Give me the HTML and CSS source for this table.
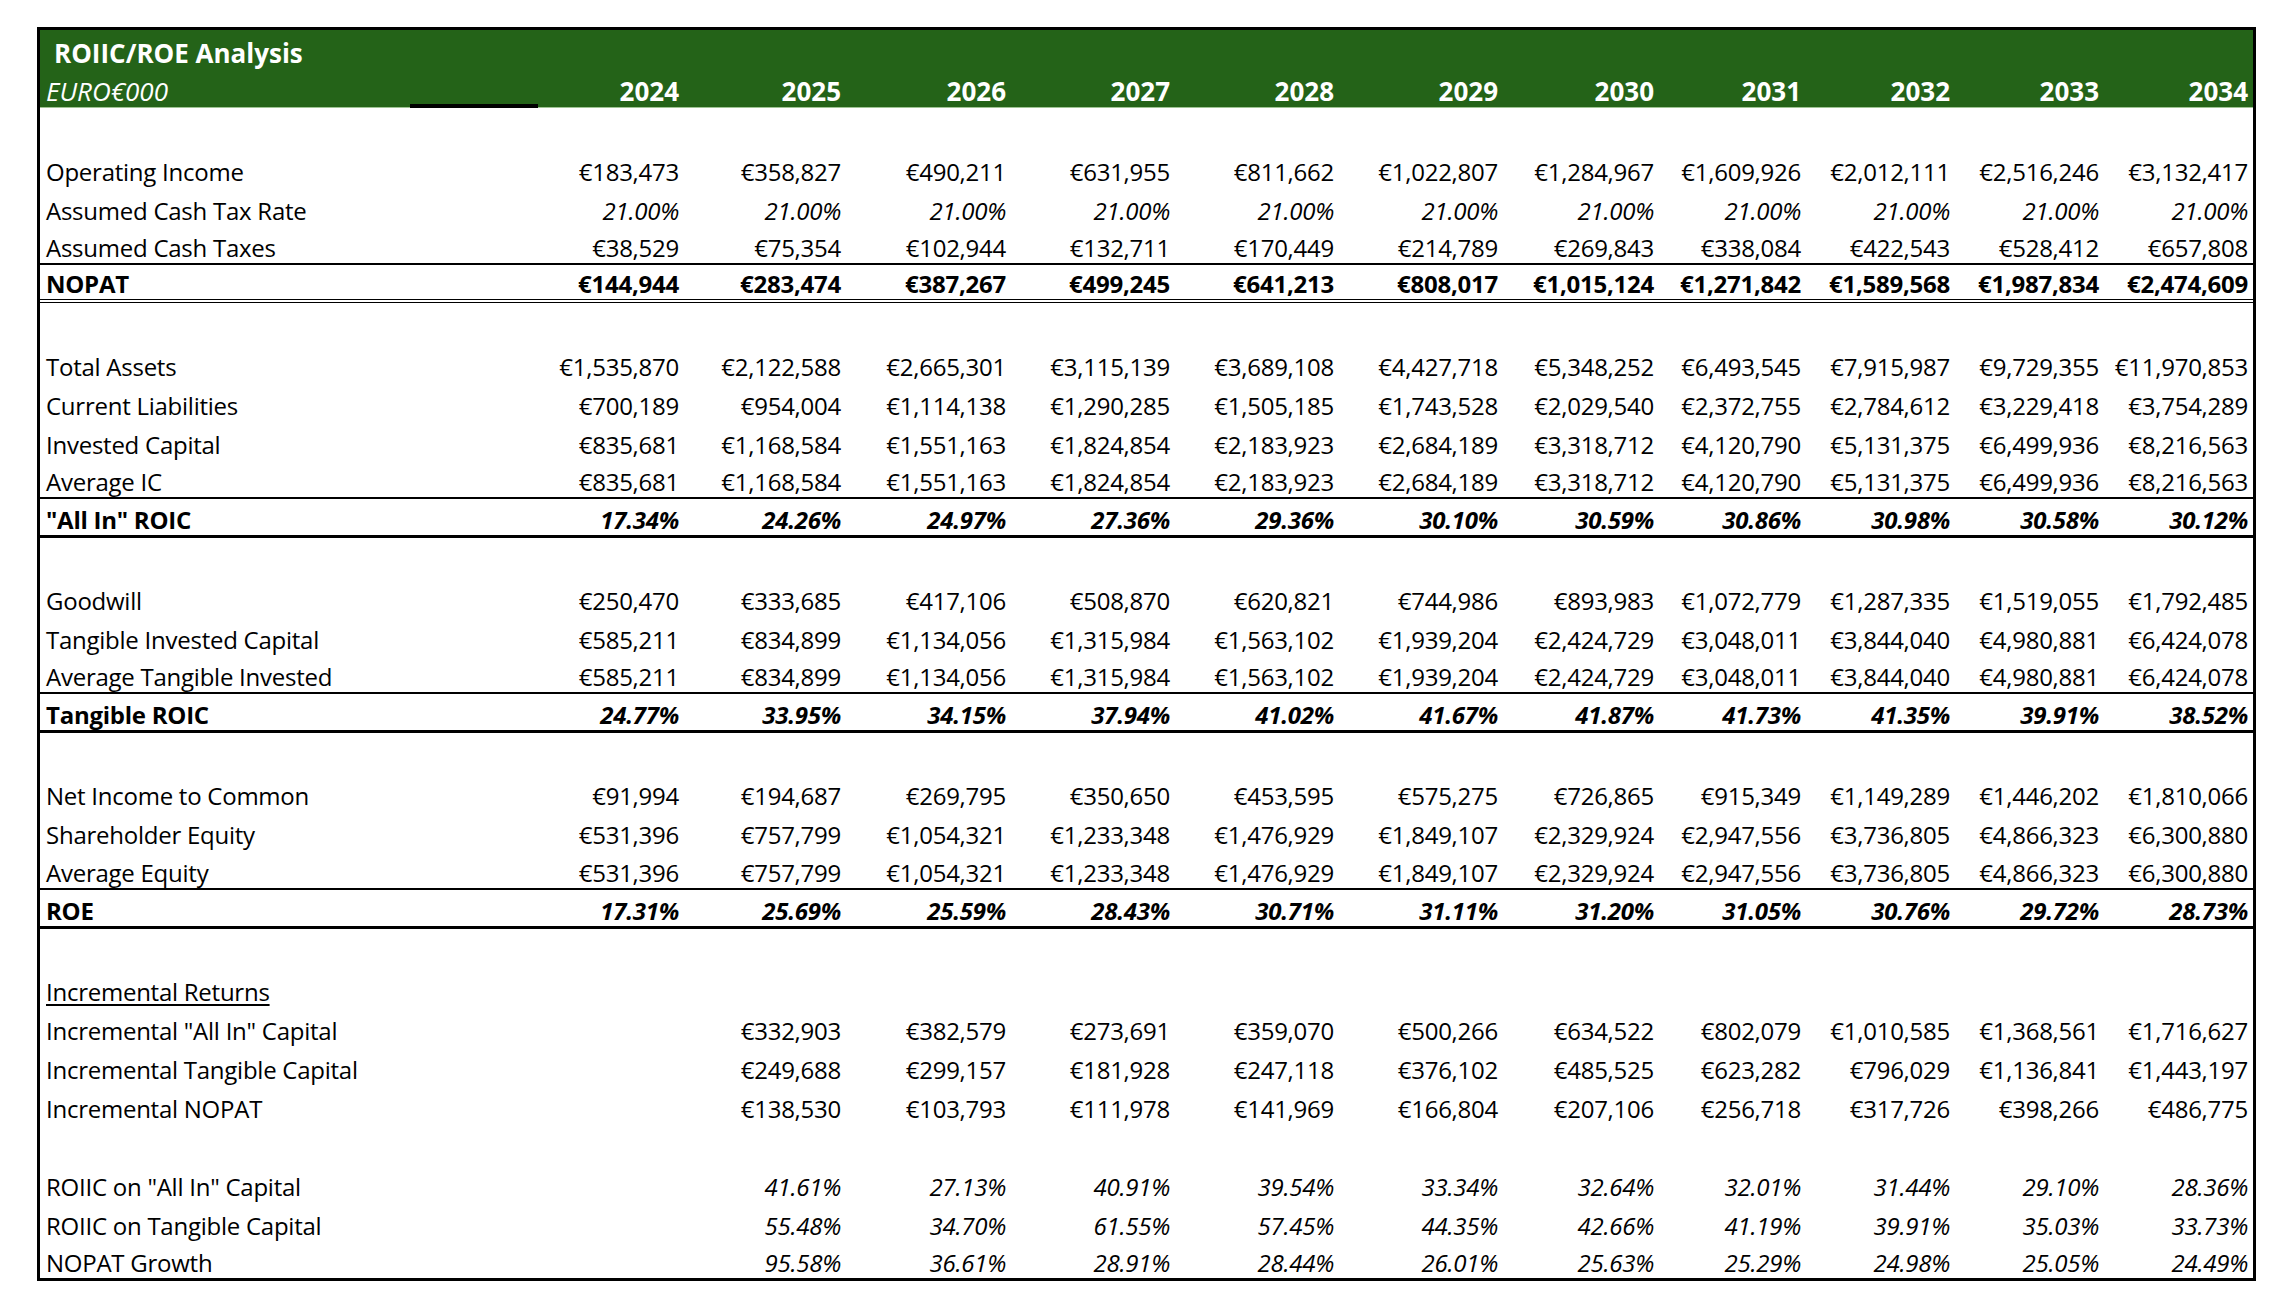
FILE: index.html
```html
<!DOCTYPE html>
<html lang="en">
<head>
<meta charset="utf-8">
<title>ROIIC/ROE Analysis</title>
<link rel="stylesheet" href="styles.css">
</head>
<body>
<div class="sheet">
  <div class="head">
    <div class="row title"><div class="cell label">ROIIC/ROE Analysis</div></div>
    <div class="row units">
      <div class="cell label it">EURO€000</div><div class="cell bar"></div>
      <div class="cell">2024</div><div class="cell">2025</div><div class="cell">2026</div><div class="cell">2027</div><div class="cell">2028</div><div class="cell">2029</div><div class="cell">2030</div><div class="cell">2031</div><div class="cell">2032</div><div class="cell">2033</div><div class="cell">2034</div>
    </div>
  </div>

  <div class="row blank"></div>
  <div class="row"><div class="cell label">Operating Income</div><div class="cell"></div><div class="cell">€183,473</div><div class="cell">€358,827</div><div class="cell">€490,211</div><div class="cell">€631,955</div><div class="cell">€811,662</div><div class="cell">€1,022,807</div><div class="cell">€1,284,967</div><div class="cell">€1,609,926</div><div class="cell">€2,012,111</div><div class="cell">€2,516,246</div><div class="cell">€3,132,417</div></div>
  <div class="row pct"><div class="cell label">Assumed Cash Tax Rate</div><div class="cell"></div><div class="cell">21.00%</div><div class="cell">21.00%</div><div class="cell">21.00%</div><div class="cell">21.00%</div><div class="cell">21.00%</div><div class="cell">21.00%</div><div class="cell">21.00%</div><div class="cell">21.00%</div><div class="cell">21.00%</div><div class="cell">21.00%</div><div class="cell">21.00%</div></div>
  <div class="row short"><div class="cell label">Assumed Cash Taxes</div><div class="cell"></div><div class="cell">€38,529</div><div class="cell">€75,354</div><div class="cell">€102,944</div><div class="cell">€132,711</div><div class="cell">€170,449</div><div class="cell">€214,789</div><div class="cell">€269,843</div><div class="cell">€338,084</div><div class="cell">€422,543</div><div class="cell">€528,412</div><div class="cell">€657,808</div></div>
  <div class="row total dbl"><div class="cell label">NOPAT</div><div class="cell"></div><div class="cell">€144,944</div><div class="cell">€283,474</div><div class="cell">€387,267</div><div class="cell">€499,245</div><div class="cell">€641,213</div><div class="cell">€808,017</div><div class="cell">€1,015,124</div><div class="cell">€1,271,842</div><div class="cell">€1,589,568</div><div class="cell">€1,987,834</div><div class="cell">€2,474,609</div></div>

  <div class="row blank"></div>
  <div class="row"><div class="cell label">Total Assets</div><div class="cell"></div><div class="cell">€1,535,870</div><div class="cell">€2,122,588</div><div class="cell">€2,665,301</div><div class="cell">€3,115,139</div><div class="cell">€3,689,108</div><div class="cell">€4,427,718</div><div class="cell">€5,348,252</div><div class="cell">€6,493,545</div><div class="cell">€7,915,987</div><div class="cell">€9,729,355</div><div class="cell">€11,970,853</div></div>
  <div class="row"><div class="cell label">Current Liabilities</div><div class="cell"></div><div class="cell">€700,189</div><div class="cell">€954,004</div><div class="cell">€1,114,138</div><div class="cell">€1,290,285</div><div class="cell">€1,505,185</div><div class="cell">€1,743,528</div><div class="cell">€2,029,540</div><div class="cell">€2,372,755</div><div class="cell">€2,784,612</div><div class="cell">€3,229,418</div><div class="cell">€3,754,289</div></div>
  <div class="row"><div class="cell label">Invested Capital</div><div class="cell"></div><div class="cell">€835,681</div><div class="cell">€1,168,584</div><div class="cell">€1,551,163</div><div class="cell">€1,824,854</div><div class="cell">€2,183,923</div><div class="cell">€2,684,189</div><div class="cell">€3,318,712</div><div class="cell">€4,120,790</div><div class="cell">€5,131,375</div><div class="cell">€6,499,936</div><div class="cell">€8,216,563</div></div>
  <div class="row short"><div class="cell label">Average IC</div><div class="cell"></div><div class="cell">€835,681</div><div class="cell">€1,168,584</div><div class="cell">€1,551,163</div><div class="cell">€1,824,854</div><div class="cell">€2,183,923</div><div class="cell">€2,684,189</div><div class="cell">€3,318,712</div><div class="cell">€4,120,790</div><div class="cell">€5,131,375</div><div class="cell">€6,499,936</div><div class="cell">€8,216,563</div></div>
  <div class="row total pct"><div class="cell label">"All In" ROIC</div><div class="cell"></div><div class="cell">17.34%</div><div class="cell">24.26%</div><div class="cell">24.97%</div><div class="cell">27.36%</div><div class="cell">29.36%</div><div class="cell">30.10%</div><div class="cell">30.59%</div><div class="cell">30.86%</div><div class="cell">30.98%</div><div class="cell">30.58%</div><div class="cell">30.12%</div></div>

  <div class="row blank after"></div>
  <div class="row"><div class="cell label">Goodwill</div><div class="cell"></div><div class="cell">€250,470</div><div class="cell">€333,685</div><div class="cell">€417,106</div><div class="cell">€508,870</div><div class="cell">€620,821</div><div class="cell">€744,986</div><div class="cell">€893,983</div><div class="cell">€1,072,779</div><div class="cell">€1,287,335</div><div class="cell">€1,519,055</div><div class="cell">€1,792,485</div></div>
  <div class="row"><div class="cell label">Tangible Invested Capital</div><div class="cell"></div><div class="cell">€585,211</div><div class="cell">€834,899</div><div class="cell">€1,134,056</div><div class="cell">€1,315,984</div><div class="cell">€1,563,102</div><div class="cell">€1,939,204</div><div class="cell">€2,424,729</div><div class="cell">€3,048,011</div><div class="cell">€3,844,040</div><div class="cell">€4,980,881</div><div class="cell">€6,424,078</div></div>
  <div class="row short"><div class="cell label">Average Tangible Invested</div><div class="cell"></div><div class="cell">€585,211</div><div class="cell">€834,899</div><div class="cell">€1,134,056</div><div class="cell">€1,315,984</div><div class="cell">€1,563,102</div><div class="cell">€1,939,204</div><div class="cell">€2,424,729</div><div class="cell">€3,048,011</div><div class="cell">€3,844,040</div><div class="cell">€4,980,881</div><div class="cell">€6,424,078</div></div>
  <div class="row total pct"><div class="cell label">Tangible ROIC</div><div class="cell"></div><div class="cell">24.77%</div><div class="cell">33.95%</div><div class="cell">34.15%</div><div class="cell">37.94%</div><div class="cell">41.02%</div><div class="cell">41.67%</div><div class="cell">41.87%</div><div class="cell">41.73%</div><div class="cell">41.35%</div><div class="cell">39.91%</div><div class="cell">38.52%</div></div>

  <div class="row blank after"></div>
  <div class="row"><div class="cell label">Net Income to Common</div><div class="cell"></div><div class="cell">€91,994</div><div class="cell">€194,687</div><div class="cell">€269,795</div><div class="cell">€350,650</div><div class="cell">€453,595</div><div class="cell">€575,275</div><div class="cell">€726,865</div><div class="cell">€915,349</div><div class="cell">€1,149,289</div><div class="cell">€1,446,202</div><div class="cell">€1,810,066</div></div>
  <div class="row"><div class="cell label">Shareholder Equity</div><div class="cell"></div><div class="cell">€531,396</div><div class="cell">€757,799</div><div class="cell">€1,054,321</div><div class="cell">€1,233,348</div><div class="cell">€1,476,929</div><div class="cell">€1,849,107</div><div class="cell">€2,329,924</div><div class="cell">€2,947,556</div><div class="cell">€3,736,805</div><div class="cell">€4,866,323</div><div class="cell">€6,300,880</div></div>
  <div class="row mid"><div class="cell label">Average Equity</div><div class="cell"></div><div class="cell">€531,396</div><div class="cell">€757,799</div><div class="cell">€1,054,321</div><div class="cell">€1,233,348</div><div class="cell">€1,476,929</div><div class="cell">€1,849,107</div><div class="cell">€2,329,924</div><div class="cell">€2,947,556</div><div class="cell">€3,736,805</div><div class="cell">€4,866,323</div><div class="cell">€6,300,880</div></div>
  <div class="row total pct"><div class="cell label">ROE</div><div class="cell"></div><div class="cell">17.31%</div><div class="cell">25.69%</div><div class="cell">25.59%</div><div class="cell">28.43%</div><div class="cell">30.71%</div><div class="cell">31.11%</div><div class="cell">31.20%</div><div class="cell">31.05%</div><div class="cell">30.76%</div><div class="cell">29.72%</div><div class="cell">28.73%</div></div>

  <div class="row blank after"></div>
  <div class="row"><div class="cell label u">Incremental Returns</div></div>
  <div class="row"><div class="cell label">Incremental "All In" Capital</div><div class="cell"></div><div class="cell"></div><div class="cell">€332,903</div><div class="cell">€382,579</div><div class="cell">€273,691</div><div class="cell">€359,070</div><div class="cell">€500,266</div><div class="cell">€634,522</div><div class="cell">€802,079</div><div class="cell">€1,010,585</div><div class="cell">€1,368,561</div><div class="cell">€1,716,627</div></div>
  <div class="row"><div class="cell label">Incremental Tangible Capital</div><div class="cell"></div><div class="cell"></div><div class="cell">€249,688</div><div class="cell">€299,157</div><div class="cell">€181,928</div><div class="cell">€247,118</div><div class="cell">€376,102</div><div class="cell">€485,525</div><div class="cell">€623,282</div><div class="cell">€796,029</div><div class="cell">€1,136,841</div><div class="cell">€1,443,197</div></div>
  <div class="row"><div class="cell label">Incremental NOPAT</div><div class="cell"></div><div class="cell"></div><div class="cell">€138,530</div><div class="cell">€103,793</div><div class="cell">€111,978</div><div class="cell">€141,969</div><div class="cell">€166,804</div><div class="cell">€207,106</div><div class="cell">€256,718</div><div class="cell">€317,726</div><div class="cell">€398,266</div><div class="cell">€486,775</div></div>
  <div class="row blank after"></div>
  <div class="row pct"><div class="cell label">ROIIC on "All In" Capital</div><div class="cell"></div><div class="cell"></div><div class="cell">41.61%</div><div class="cell">27.13%</div><div class="cell">40.91%</div><div class="cell">39.54%</div><div class="cell">33.34%</div><div class="cell">32.64%</div><div class="cell">32.01%</div><div class="cell">31.44%</div><div class="cell">29.10%</div><div class="cell">28.36%</div></div>
  <div class="row pct"><div class="cell label">ROIIC on Tangible Capital</div><div class="cell"></div><div class="cell"></div><div class="cell">55.48%</div><div class="cell">34.70%</div><div class="cell">61.55%</div><div class="cell">57.45%</div><div class="cell">44.35%</div><div class="cell">42.66%</div><div class="cell">41.19%</div><div class="cell">39.91%</div><div class="cell">35.03%</div><div class="cell">33.73%</div></div>
  <div class="row pct last"><div class="cell label">NOPAT Growth</div><div class="cell"></div><div class="cell"></div><div class="cell">95.58%</div><div class="cell">36.61%</div><div class="cell">28.91%</div><div class="cell">28.44%</div><div class="cell">26.01%</div><div class="cell">25.63%</div><div class="cell">25.29%</div><div class="cell">24.98%</div><div class="cell">25.05%</div><div class="cell">24.49%</div></div>
</div>
</body>
</html>
```

FILE: styles.css
```css
* { box-sizing: border-box; }

body {
  margin: 0;
  background: #ffffff;
  color: #000000;
  font-family: "Open Sans", "Liberation Sans", sans-serif;
  font-size: 24px;
  letter-spacing: -0.25px;
}

.sheet {
  margin: 27px 0 0 37px;
  width: 2219px;
  border: 3px solid #000000;
}

.row {
  display: grid;
  grid-template-columns: 370px 128px 146px 162px 165px 164px 164px 164px 156px 147px 149px 149px 149px;
  height: 39.1px;
  align-items: end;
}

.row.blank { height: 40px; }
.row.blank.after { height: 38.5px; }
.row.short { height: 37px; }
.row.mid { height: 38.5px; }
.row.last { height: 37px; }

.cell {
  padding: 0 5px 0 5px;
  line-height: 30px;
  text-align: right;
  white-space: nowrap;
}

.cell.label {
  text-align: left;
  padding-left: 6px;
}

.pct .cell { font-style: italic; }
.pct .cell.label { font-style: normal; }

.total {
  height: 41px;
  border-top: 2px solid #000000;
  border-bottom: 3px solid #000000;
  font-weight: 700;
}
.total.dbl {
  height: 40px;
  border-bottom: 4px double #000000;
}

.u { text-decoration: underline; text-underline-offset: 3px; }

/* header band */
.head {
  background: #246318;
  color: #ffffff;
  border-bottom: 1px solid #9fc493;
  font-size: 26px;
  letter-spacing: 0;
}
.head .cell { line-height: 31px; }
.head .row.title { height: 40px; }
.head .row.title .label {
  font-weight: 700;
  padding-left: 14px;
  padding-bottom: 1px;
}
.head .row.units {
  height: 37px;
  font-weight: 700;
}
.head .row.units .label { font-weight: 400; }
.it { font-style: italic; }
.head .bar {
  align-self: end;
  height: 4px;
  padding: 0;
  background: #000000;
  margin-bottom: -1px;
}
```
